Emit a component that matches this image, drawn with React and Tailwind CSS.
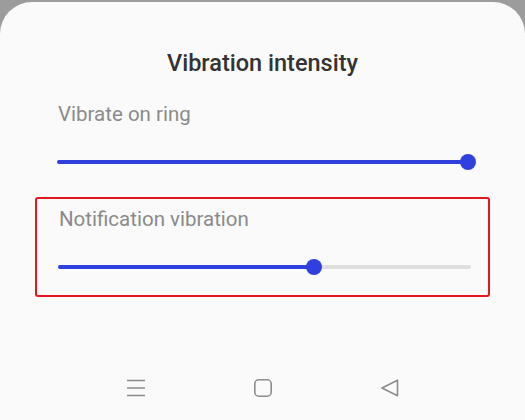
import React from 'react';

const Slider = ({ left, width, value }) => (
  <div className="relative h-5" style={{ marginLeft: left, width }}>
    <div className="absolute left-0 right-0 top-1/2 h-[4px] -translate-y-1/2 rounded-full bg-[#dedede]" />
    <div
      className="absolute left-0 top-1/2 h-[4px] -translate-y-1/2 rounded-full bg-[#3040de]"
      style={{ width: `${value}%` }}
    />
    <div
      className="absolute top-1/2 h-4 w-4 -translate-x-1/2 -translate-y-1/2 rounded-full bg-[#3040de]"
      style={{ left: `${value}%` }}
    />
  </div>
);

const NavBar = () => (
  <div className="flex items-center justify-center gap-[107px] text-[#8c8c8c]">
    <svg width="20" height="18" viewBox="0 0 20 18" fill="none" stroke="currentColor" strokeWidth="1.6">
      <path d="M1 1.5h18M1 9h18M1 16.5h18" />
    </svg>
    <svg width="20" height="18" viewBox="0 0 20 18" fill="none" stroke="currentColor" strokeWidth="1.6">
      <rect x="1.8" y="0.8" width="16.4" height="16.4" rx="4" />
    </svg>
    <svg width="20" height="18" viewBox="0 0 20 18" fill="none" stroke="currentColor" strokeWidth="1.6" strokeLinejoin="round">
      <path d="M17.5 1.2v15.6L2 9z" />
    </svg>
  </div>
);

export default function App() {
  return (
    <div className="h-[420px] w-[525px] overflow-hidden bg-[#9c9c9c] font-['Roboto','Liberation_Sans',sans-serif]">
      <div className="mt-[2px] h-[418px] rounded-t-[32px] bg-[#fafafa] pt-[47px]">
        <h1 className="text-center text-[23.5px] font-medium leading-[28px] text-[#333333]">
          Vibration intensity
        </h1>

        <div className="mt-[25px] pl-[58px] text-[20.5px] leading-[24px] text-[#8a8a8a]">Vibrate on ring</div>
        <div className="mt-[26px]">
          <Slider left={57} width={411} value={100} />
        </div>

        <div className="mx-[35px] mt-[25px] rounded-[3px] border-2 border-[#e5161e] pb-[18px] pt-[8px]">
          <div className="pl-[22px] text-[20.5px] leading-[24px] text-[#8a8a8a]">Notification vibration</div>
          <div className="mt-[26px]">
            <Slider left={21} width={413} value={62} />
          </div>
        </div>

        <div className="mt-[82px] pl-[1px]">
          <NavBar />
        </div>
      </div>
    </div>
  );
}
